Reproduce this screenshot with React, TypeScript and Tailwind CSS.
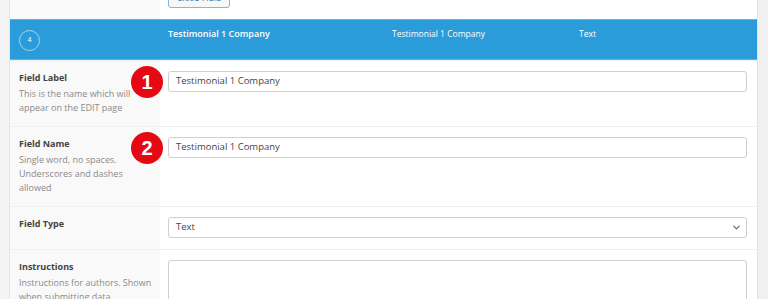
import { ChevronDown } from 'lucide-react';

const font = { fontFamily: '"Open Sans", "Noto Sans", sans-serif' };

function Badge({ n }: { n: string }) {
  return (
    <div className="absolute left-[121px] top-[5px] flex h-[32px] w-[32px] items-center justify-center rounded-full bg-[#e50914] text-[20px] font-bold leading-none text-white [font-family:'Liberation_Sans',Arial,sans-serif]">
      {n}
    </div>
  );
}

function Row({
  label,
  desc,
  badge,
  children,
}: {
  label: string;
  desc?: string[];
  badge?: string;
  children: React.ReactNode;
}) {
  return (
    <div className="relative flex border-t border-[#f0f0f0]">
      <div className="w-[150px] shrink-0 bg-[#f9f9f9] px-[9px] pt-[10px] pb-[11px]">
        <div className="text-[9px] font-bold leading-[14px] text-[#444]">{label}</div>
        {desc && (
          <div className="mt-[2px] whitespace-nowrap text-[9px] leading-[14px] text-[#8a8a8a]">
            {desc.map((d) => (
              <div key={d}>{d}</div>
            ))}
          </div>
        )}
      </div>
      <div className="flex-1 pt-[10px] pb-[11px] pl-[8px] pr-[10px]">{children}</div>
      {badge && <Badge n={badge} />}
    </div>
  );
}

function Input({ value }: { value: string }) {
  return (
    <div className="flex h-[21px] items-center rounded-[3px] border border-[#cfcfcf] bg-white px-[7px] text-[9.5px] text-[#444]">
      {value}
    </div>
  );
}

export default function App() {
  return (
    <div className="flex h-[299px] w-[768px] overflow-hidden bg-[#f1f1f1]" style={font}>
      <div className="w-[10px] shrink-0 border-r border-[#e6e6e6] bg-[#f3f3f3]" />
      <div className="flex flex-1 flex-col bg-white">
        <div className="flex h-[19px] shrink-0">
          <div className="w-[150px] bg-[#f9f9f9]" />
          <div className="pl-[8px]">
            <div className="-mt-[12px] flex h-[20px] w-[62px] items-center justify-center rounded-[3px] border border-[#7fb8dc] bg-[#f6f7f7] text-[9px] text-[#2a7ab0]">
              Close Field
            </div>
          </div>
        </div>
        <div className="flex h-[41px] shrink-0 border-y border-[#5fb3e3] bg-[#2a9cd9] text-white">
          <div className="flex w-[150px] shrink-0 items-center pl-[9px]">
            <div className="mt-[2px] flex h-[21px] w-[21px] items-center justify-center rounded-full border border-[#a9d5ef] text-[7px]">
              4
            </div>
          </div>
          <div className="flex pt-[7px] pl-[8px]">
            <div className="w-[224px] text-[9px] font-semibold leading-[14px]">Testimonial 1 Company</div>
            <div className="w-[187px] text-[8.5px] leading-[14px]">Testimonial 1 Company</div>
            <div className="text-[8.5px] leading-[14px]">Text</div>
          </div>
        </div>
        <Row label="Field Label" desc={['This is the name which will', 'appear on the EDIT page']} badge="1">
          <Input value="Testimonial 1 Company" />
        </Row>
        <Row
          label="Field Name"
          desc={['Single word, no spaces.', 'Underscores and dashes', 'allowed']}
          badge="2"
        >
          <Input value="Testimonial 1 Company" />
        </Row>
        <Row label="Field Type">
          <div className="flex h-[21px] items-center justify-between rounded-[3px] border border-[#cfcfcf] bg-white pl-[7px] pr-[4px] text-[9.5px] text-[#444]">
            <span>Text</span>
            <ChevronDown className="h-[11px] w-[11px] text-[#666]" strokeWidth={2.5} />
          </div>
        </Row>
        <Row label="Instructions" desc={['Instructions for authors. Shown', 'when submitting data']}>
          <div className="h-[70px] rounded-[3px] border border-[#cfcfcf] bg-white" />
        </Row>
      </div>
      <div className="w-[11px] shrink-0 border-l border-[#e4e4e4] bg-[#f0f0f0]" />
    </div>
  );
}
